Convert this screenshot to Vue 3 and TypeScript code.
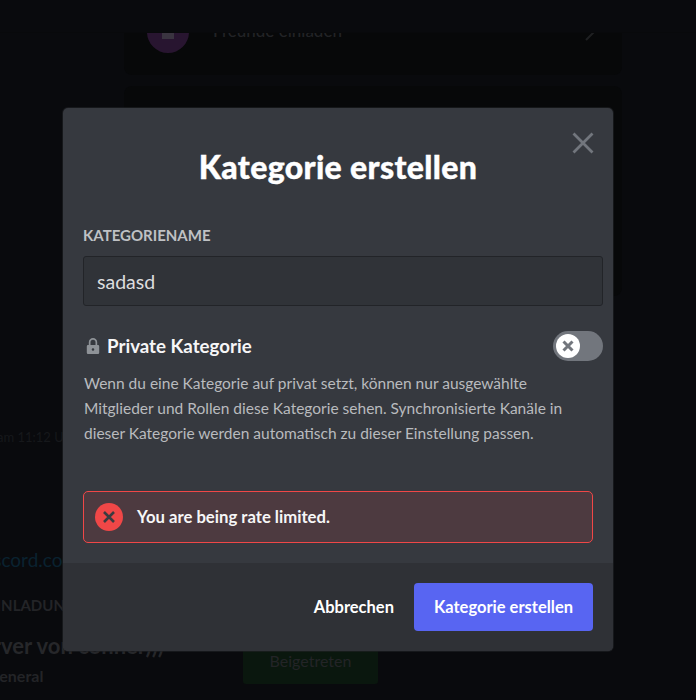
<script setup lang="ts">
const descriptionLines = [
  'Wenn du eine Kategorie auf privat setzt, können nur ausgewählte',
  'Mitglieder und Rollen diese Kategorie sehen. Synchronisierte Kanäle in',
  'dieser Kategorie werden automatisch zu dieser Einstellung passen.'
]
</script>

<template>
  <div class="page">
    <div class="backdrop">
      <div class="topbar"></div>
      <div class="card card-invite">
        <div class="avatar"><span class="avatar-icon"></span></div>
        <span class="invite-text">Freunde einladen</span>
        <svg class="chev" width="12" height="16" viewBox="0 0 12 16"><path d="M3 1l7 7-7 7" fill="none" stroke="#1f2022" stroke-width="2"/></svg>
      </div>
      <div class="card card-second"></div>
      <div class="chat">
        <div class="stamp">am 11:12 Uhr</div>
        <div class="link">discord.com</div>
        <div class="invite-label">EINLADUNG</div>
        <div class="server-row">
          <div class="server-text">
            <div class="server-name">Server von conner)))</div>
            <div class="server-channel">general</div>
          </div>
          <div class="joined">Beigetreten</div>
        </div>
      </div>
    </div>

    <div class="modal">
      <div class="modal-top">
        <svg class="close" width="24" height="24" viewBox="0 0 24 24"><path d="M2.5 2.5l19 19M21.5 2.5l-19 19" stroke="#72767d" stroke-width="2.8" fill="none"/></svg>
        <h1 class="title">Kategorie erstellen</h1>
      </div>
      <div class="content">
        <label class="label">KATEGORIENAME</label>
        <div class="input">sadasd</div>
        <div class="private-row">
          <div class="private-name">
            <svg class="lock" width="16" height="18" viewBox="0 0 16 18"><path fill="#8e9297" fill-rule="evenodd" d="M8 1A4.200 4.200 0 0 0 3.800 5.200V8H3A1.200 1.200 0 0 0 1.800 9.200v6.600A1.200 1.200 0 0 0 3 17h10a1.200 1.200 0 0 0 1.200-1.200V9.200A1.200 1.200 0 0 0 13 8h-.8V5.200A4.200 4.200 0 0 0 8 1zM5.500 8V5.200a2.500 2.500 0 0 1 5 0V8zM8 11.200a1.300 1.300 0 1 1 0 2.600 1.300 1.300 0 0 1 0-2.600z"/></svg>
            <span>Private Kategorie</span>
          </div>
          <div class="toggle">
            <div class="knob">
              <svg width="14" height="14" viewBox="0 0 14 14"><path d="M2.500 2.500l9 9M11.500 2.500l-9 9" stroke="#72767d" stroke-width="3" fill="none"/></svg>
            </div>
          </div>
        </div>
        <p class="description">
          <span v-for="line in descriptionLines" :key="line" class="desc-line">{{ line }}</span>
        </p>
      </div>
      <div class="error">
        <div class="error-icon">
          <svg width="16" height="16" viewBox="0 0 16 16"><path d="M3 3l10 10M13 3L3 13" stroke="#3a3b40" stroke-width="2.600" fill="none"/></svg>
        </div>
        <span>You are being rate limited.</span>
      </div>
      <div class="footer">
        <button class="cancel" type="button">Abbrechen</button>
        <button class="submit" type="button">Kategorie erstellen</button>
      </div>
    </div>
  </div>
</template>

<style>
html, body { margin: 0; background: #090a0d; }
</style>

<style scoped>
.page {
  position: relative;
  width: 696px;
  height: 700px;
  overflow: hidden;
  font-family: Lato, "Noto Sans", sans-serif;
}
.backdrop {
  width: 696px;
  height: 700px;
  background: #090a0d;
  display: flex;
  flex-direction: column;
  overflow: hidden;
}
.topbar { height: 33px; background: #090a0d; flex: none; border-bottom: 1px solid #08090b; box-sizing: border-box; }
.card { margin-left: 124px; width: 498px; background: #070809; border-radius: 8px; flex: none; }
.card-invite {
  height: 42px;
  border-radius: 0 0 8px 8px;
  position: relative;
  overflow: hidden;
  color: #222326;
  font-size: 16px;
}
.avatar {
  position: absolute; left: 23px; top: -31px;
  width: 42px; height: 42px; border-radius: 50%;
  background: #281530;
  margin-top: 9px;
  display: flex; justify-content: center;
}
.avatar-icon { margin-top: 22px; width: 12px; height: 6px; background: #3a3440; }
.invite-text { position: absolute; left: 89px; top: -13px; font-weight: 500; font-size: 17px; }
.chev { position: absolute; right: 27px; top: -8px; }
.card-second { height: 210px; margin-top: 11px; }
.chat { flex: 1; position: relative; color: #1f2023; }
.stamp { margin: 133px 0 0 -3px; font-size: 13px; color: #16181b; white-space: nowrap; }
.link { margin: 103px 0 0 -22px; font-size: 19px; color: #0a2230; white-space: nowrap; }
.invite-label { margin: 25px 0 0 -12px; font-size: 15px; font-weight: 700; color: #232427; white-space: nowrap; }
.server-row { display: flex; align-items: flex-start; width: 378px; margin-top: 19px; justify-content: space-between; }
.server-text { margin-left: -31px; }
.server-name { font-size: 22px; font-weight: 700; color: #26272a; white-space: nowrap; line-height: 26px; }
.server-channel { font-size: 16px; font-weight: 700; color: #232427; margin: 6px 0 0 22px; line-height: 22px; }
.joined {
  width: 135px; height: 47px; background: #0a170e; border-radius: 3px; margin-top: 4px;
  color: #232427; font-size: 16px; display: flex; align-items: center; justify-content: center;
}
.modal {
  position: absolute;
  left: 63px;
  top: 108px;
  width: 550px;
  height: 543px;
  background: #36393f;
  border-radius: 5px;
  box-shadow: 0 0 0 1px rgba(32, 34, 37, 0.6);
  display: flex;
  flex-direction: column;
  overflow: hidden;
}
.modal-top { height: 117px; position: relative; flex: none; }
.close { position: absolute; right: 18px; top: 23px; }
.title {
  margin: 0;
  padding-top: 39px;
  text-align: center;
  color: #fff;
  font-size: 32px;
  line-height: 40px;
  font-weight: 900;
  letter-spacing: 0.35px;
  -webkit-text-stroke: 0.4px #fff;
}
.content { padding: 0 10px 0 20px; flex: none; }
.label {
  display: block;
  font-size: 15px;
  line-height: 20px;
  font-weight: 700;
  color: #bfc1c4;
  margin-bottom: 11px;
}
.input {
  height: 50px;
  box-sizing: border-box;
  background: #303338;
  border: 1px solid #222428;
  border-radius: 3px;
  padding: 0 13px;
  display: flex;
  align-items: center;
  color: #dcddde;
  font-size: 19.500px;
}
.private-row {
  display: flex;
  align-items: center;
  justify-content: space-between;
  margin-top: 25px;
  height: 30px;
}
.private-name { display: flex; align-items: center; gap: 6px; color: #f6f6f7; font-size: 18.700px; font-weight: 700; }
.lock { margin-left: 2px; }
.toggle {
  width: 50px; height: 30px; border-radius: 15px; background: #72767d;
  display: flex; align-items: center; padding-left: 3px; box-sizing: border-box;
}
.knob {
  width: 24px; height: 24px; border-radius: 50%; background: #fff;
  display: flex; align-items: center; justify-content: center;
}
.description { margin: 10px 0 0 1px; color: #b9bbbe; font-size: 15.500px; line-height: 25px; }
.desc-line { display: block; white-space: nowrap; }
.error {
  margin: 45px 20px 0;
  height: 52px;
  box-sizing: border-box;
  border: 1px solid #f04747;
  border-radius: 5px;
  background: rgba(240, 71, 71, 0.125);
  display: flex;
  align-items: center;
  gap: 14px;
  padding-left: 11px;
  color: #f6f6f7;
  font-size: 16.700px;
  font-weight: 700;
  flex: none;
}
.error-icon {
  width: 28px; height: 28px; border-radius: 50%; background: #f04747;
  display: flex; align-items: center; justify-content: center;
}
.footer {
  margin-top: auto;
  height: 88px;
  flex: none;
  background: #2f3136;
  display: flex;
  align-items: center;
  justify-content: flex-end;
  padding: 0 20px;
  gap: 20px;
}
.cancel, .submit {
  font-family: inherit;
  border: 0;
  font-size: 16.500px;
  font-weight: 700;
  color: #fff;
  cursor: pointer;
}
.cancel { background: none; padding: 0; }
.submit { width: 179px; height: 48px; border-radius: 4px; background: #5865f2; padding: 0; }
</style>
